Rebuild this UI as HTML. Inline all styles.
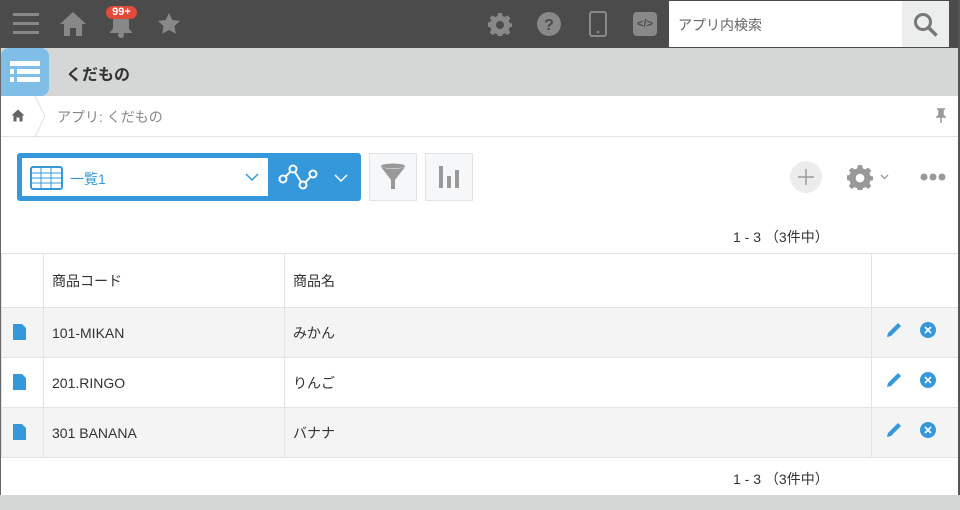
<!DOCTYPE html>
<html style="height:510px;overflow:hidden"><head><meta charset="utf-8"><style>
*{box-sizing:border-box;margin:0;padding:0}
body{width:960px;height:510px;overflow:hidden;background:#fff;font-family:"Liberation Sans","Noto Sans CJK JP",sans-serif;position:relative;color:#333}
.abs{position:absolute}
#top{left:0;top:0;width:960px;height:48px;background:#4b4b4b}
#hdr{left:0;top:48px;width:960px;height:48px;background:#d5d6d6}
#bc{left:0;top:96px;width:960px;height:41px;background:#fff;border-bottom:1px solid #e3e3e3}
table{border-collapse:collapse;position:absolute;left:1px;top:253px;width:958px;font-size:14px}
td{border:1px solid #e3e3e3;padding:0 8px;height:50px}
tr.h td{height:54px;background:#fff}
tr.g td{background:#f4f4f4}
tr.w td{background:#fff}
.cnt{font-size:14px;color:#333;left:733px}
</style></head><body>
<div id="top" class="abs">
 <svg class="abs" style="left:13px;top:12px" width="26" height="24"><rect y="1" width="26" height="3" fill="#888"/><rect y="10" width="26" height="3" fill="#888"/><rect y="19" width="26" height="3" fill="#888"/></svg>
 <svg class="abs" style="left:60px;top:11px" width="26" height="26" viewBox="0 0 26 26"><path d="M13 1L0 13h4v12h6v-8h6v8h6V13h4z" fill="#888"/></svg>
 <svg class="abs" style="left:109px;top:12px" width="24" height="26" viewBox="0 0 24 26"><path d="M12 1c-5 0-8 4-8 9v7l-3 3v1h22v-1l-3-3v-7c0-5-3-9-8-9z" fill="#888"/><circle cx="12" cy="23" r="3" fill="#888"/></svg>
 <div class="abs" style="left:106px;top:6px;width:31px;height:13px;border-radius:7px;background:#e04b3a;color:#fff;font-size:11px;font-weight:bold;text-align:center;line-height:13px">99+</div>
 <svg class="abs" style="left:156px;top:12px" width="26" height="24" viewBox="0 0 24 24"><path d="M12 1l3.4 7 7.6.9-5.6 5.2 1.5 7.6L12 18l-6.9 3.7 1.5-7.6L1 8.9 8.6 8z" fill="#888"/></svg>
 <svg class="abs" style="left:488px;top:12px" width="24" height="24" viewBox="0 0 24 24"><path d="M10 1h4l.6 3 2.4 1 2.6-1.7 2.8 2.8L20.7 8.7l1 2.4 3 .6v3l-3 .6-1 2.4 1.7 2.6-2.8 2.8-2.6-1.7-2.4 1-.6 3h-4l-.6-3-2.4-1-2.6 1.7-2.8-2.8 1.7-2.6-1-2.4-3-.6v-4l3-.6 1-2.4L1.6 6.1 4.4 3.3 7 5l2.4-1z" fill="#888"/><circle cx="12" cy="13" r="4" fill="#4b4b4b"/></svg>
 <svg class="abs" style="left:536px;top:11px" width="26" height="26" viewBox="0 0 26 26"><circle cx="13" cy="13" r="12" fill="#888"/><text x="13" y="19" font-size="16" font-weight="bold" text-anchor="middle" fill="#4b4b4b" font-family="Liberation Sans">?</text></svg>
 <svg class="abs" style="left:589px;top:11px" width="18" height="26"><rect x="1" y="1" width="16" height="24" rx="2" fill="none" stroke="#888" stroke-width="2"/><circle cx="9" cy="21" r="1.3" fill="#888"/></svg>
 <div class="abs" style="left:633px;top:12px;width:24px;height:24px;border-radius:4px;background:#888;color:#4b4b4b;font-size:11px;font-weight:bold;text-align:center;line-height:24px">&lt;/&gt;</div>
 <div class="abs" style="left:669px;top:1px;width:233px;height:46px;background:#fff;font-size:14px;color:#666;padding:14px 9px">アプリ内検索</div>
 <div class="abs" style="left:902px;top:1px;width:47px;height:46px;background:#eceded"></div>
 <svg class="abs" style="left:913px;top:12px" width="26" height="26" viewBox="0 0 26 26"><circle cx="10" cy="10" r="7.5" fill="none" stroke="#777" stroke-width="3"/><path d="M15.5 15.5l8 8" stroke="#777" stroke-width="3.5"/></svg>
</div>
<div id="hdr" class="abs">
 <div class="abs" style="left:1px;top:0;width:48px;height:48px;background:#7fbfe7;border-radius:8px 8px 8px 0"></div>
 <svg class="abs" style="left:10px;top:13px" width="30" height="22"><rect width="30" height="5" fill="#fff"/><rect y="8" width="4" height="5" fill="#fff"/><rect x="7" y="8" width="23" height="5" fill="#fff"/><rect y="16" width="4" height="5" fill="#fff"/><rect x="7" y="16" width="23" height="5" fill="#fff"/></svg>
 <div class="abs" style="left:66px;top:13px;font-size:16px;font-weight:bold;color:#333">くだもの</div>
</div>
<div id="bc" class="abs">
 <svg class="abs" style="left:11px;top:13px" width="14" height="13" viewBox="0 0 26 26"><path d="M13 1L0 13h4v12h6v-8h6v8h6V13h4z" fill="#666"/></svg>
 <svg class="abs" style="left:34px;top:0" width="12" height="41"><path d="M1 0l10 20L1 41" fill="none" stroke="#e0e0e0"/></svg>
 <div class="abs" style="left:57px;top:11px;font-size:14px;color:#888">アプリ: くだもの</div>
 <svg class="abs" style="left:936px;top:12px" width="10" height="15"><path d="M1 1h8M3 1v6l-2 2h8l-2-2V1M5 9v6" fill="#999" stroke="#999" stroke-width="1.5"/></svg>
</div>
<div class="abs" style="left:17px;top:153px;width:344px;height:48px;background:#3498db;border-radius:3px"></div>
<div class="abs" style="left:22px;top:158px;width:246px;height:38px;background:#fff"></div>
<svg class="abs" style="left:30px;top:166px" width="33" height="24"><rect x="1" y="1" width="31" height="22" rx="2" fill="#fff" stroke="#3498db" stroke-width="2"/><path d="M1 7h31M1 12h31M1 17h31M11 1v22M21 1v22" stroke="#3498db"/></svg>
<div class="abs" style="left:70px;top:169px;font-size:14px;color:#3498db">一覧1</div>
<svg class="abs" style="left:245px;top:173px" width="14" height="8"><path d="M1 1l6 6 6-6" fill="none" stroke="#3498db" stroke-width="1.5"/></svg>
<svg class="abs" style="left:278px;top:164px" width="42" height="26"><path d="M5 15L15 5L25 21L35 10" fill="none" stroke="#fff" stroke-width="2"/><g fill="#3498db" stroke="#fff" stroke-width="2"><circle cx="5" cy="15" r="3.5"/><circle cx="15" cy="5" r="3.5"/><circle cx="25" cy="21" r="3.5"/><circle cx="35" cy="10" r="3.5"/></g></svg>
<svg class="abs" style="left:334px;top:174px" width="14" height="8"><path d="M1 1l6 6 6-6" fill="none" stroke="#fff" stroke-width="1.5"/></svg>
<div class="abs" style="left:369px;top:153px;width:48px;height:48px;background:#f6f7f8;border:1px solid #e3e3e3"></div>
<svg class="abs" style="left:379px;top:163px" width="28" height="28" viewBox="0 0 28 28"><ellipse cx="14" cy="3" rx="12" ry="2.5" fill="#999"/><path d="M2 4q12 4 24 0L16 17v9h-4v-9z" fill="#999"/></svg>
<div class="abs" style="left:425px;top:153px;width:48px;height:48px;background:#f6f7f8;border:1px solid #e3e3e3"></div>
<svg class="abs" style="left:439px;top:164px" width="20" height="24"><rect x="0" y="2" width="4" height="22" fill="#999"/><rect x="8" y="12" width="4" height="12" fill="#999"/><rect x="16" y="6" width="4" height="18" fill="#999"/></svg>
<div class="abs" style="left:790px;top:161px;width:32px;height:32px;border-radius:50%;background:#ececec"></div>
<svg class="abs" style="left:797px;top:168px" width="18" height="18"><path d="M9 1v16M1 9h16" stroke="#999" stroke-width="1.5"/></svg>
<svg class="abs" style="left:847px;top:164px" width="26" height="26" viewBox="0 0 24 24"><path d="M10 1h4l.6 3 2.4 1 2.6-1.7 2.8 2.8L20.7 8.7l1 2.4 3 .6v3l-3 .6-1 2.4 1.7 2.6-2.8 2.8-2.6-1.7-2.4 1-.6 3h-4l-.6-3-2.4-1-2.6 1.7-2.8-2.8 1.7-2.6-1-2.4-3-.6v-4l3-.6 1-2.4L1.6 6.1 4.4 3.3 7 5l2.4-1z" fill="#999"/><circle cx="12" cy="13" r="4" fill="#fff"/></svg>
<svg class="abs" style="left:880px;top:174px" width="9" height="6"><path d="M1 1l3.5 3.5L8 1" fill="none" stroke="#999" stroke-width="1.3"/></svg>
<svg class="abs" style="left:920px;top:173px" width="26" height="8"><circle cx="4" cy="4" r="3.5" fill="#999"/><circle cx="13" cy="4" r="3.5" fill="#999"/><circle cx="22" cy="4" r="3.5" fill="#999"/></svg>
<div class="abs cnt" style="top:227px">1 - 3 （3件中）</div>
<table>
<tr class="h"><td style="width:42px"></td><td style="width:241px">商品コード</td><td style="width:587px">商品名</td><td></td></tr>
<tr class="g"><td></td><td>101-MIKAN</td><td>みかん</td><td></td></tr>
<tr class="w"><td></td><td>201.RINGO</td><td>りんご</td><td></td></tr>
<tr class="g"><td></td><td>301 BANANA</td><td>バナナ</td><td></td></tr>
</table>
<div class="abs cnt" style="top:469px">1 - 3 （3件中）</div>
<div class="abs" style="left:0;top:495px;width:960px;height:15px;background:#d5d6d6"></div>
<div class="abs" style="left:0;top:48px;width:1px;height:447px;background:#666"></div>
<div class="abs" style="left:958px;top:0;width:2px;height:495px;background:#555"></div>
<svg class="abs" style="left:13px;top:324px" width="14" height="134">
<g fill="#3498db"><path d="M0 0h9l4 4v12H0z"/><path d="M0 50h9l4 4v12H0z"/><path d="M0 100h9l4 4v12H0z"/></g></svg>
<svg class="abs" style="left:886px;top:320px" width="52" height="120">
<g fill="#3498db">
<path d="M1 17l1-4 10-10 3 3-10 10z"/><circle cx="42" cy="10" r="8"/>
<path d="M1 67l1-4 10-10 3 3-10 10z"/><circle cx="42" cy="60" r="8"/>
<path d="M1 117l1-4 10-10 3 3-10 10z"/><circle cx="42" cy="110" r="8"/></g>
<g stroke="#fff" stroke-width="1.6"><path d="M39 7l6 6M45 7l-6 6M39 57l6 6M45 57l-6 6M39 107l6 6M45 107l-6 6"/></g></svg>
</body></html>
